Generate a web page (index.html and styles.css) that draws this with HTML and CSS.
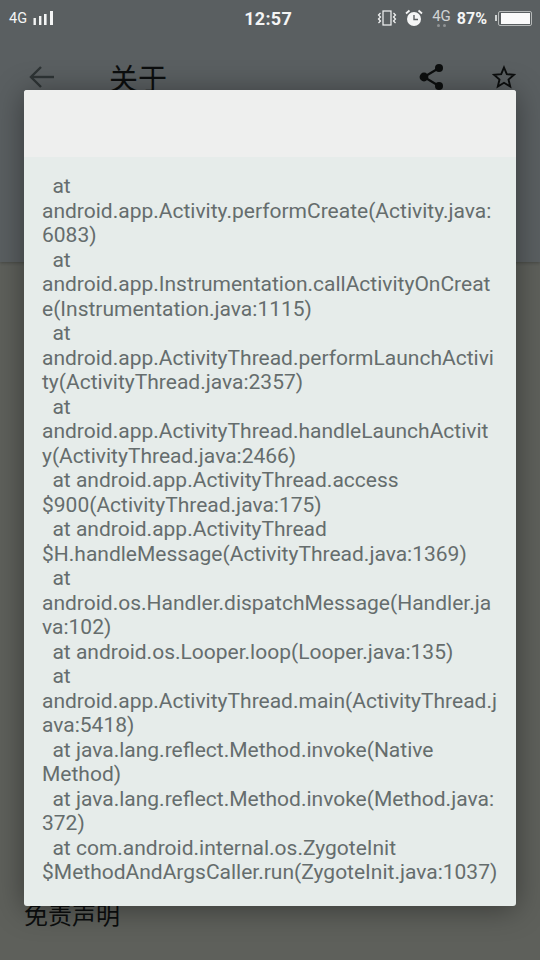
FILE: index.html
```html
<!DOCTYPE html>
<html lang="zh">
<head>
  <meta charset="UTF-8">
  <meta name="viewport" content="width=device-width, initial-scale=1.0">
  <title>关于</title>
  <link rel="stylesheet" href="styles.css">
</head>
<body>
  <div class="screen">
    <header class="app-header">
      <div class="status-bar">
        <div class="status-left">
          <span class="net">4G</span>
          <svg class="signal" width="21" height="16" viewBox="0 0 21 16">
            <rect x="0.5" y="8" width="2.4" height="7" />
            <rect x="6" y="6" width="2.4" height="9" />
            <rect x="11" y="4" width="2.6" height="11" />
            <rect x="17" y="1" width="3" height="14" />
          </svg>
        </div>
        <div class="status-time">12:57</div>
        <div class="status-right">
          <svg class="vibrate" width="20" height="16" viewBox="0 0 20 16" fill="none" stroke="#f4f5f5" stroke-width="1.2">
            <rect x="6" y="1" width="8" height="14" />
            <path d="M3.5 3 L1.5 5 L3.5 7 L1.5 9 L3.5 11 L1.5 13" />
            <path d="M16.5 3 L18.5 5 L16.5 7 L18.5 9 L16.5 11 L18.5 13" />
          </svg>
          <svg class="alarm" width="18" height="18" viewBox="0 0 18 18">
            <circle cx="9" cy="10" r="7" fill="#f4f5f5" />
            <path d="M9 6 V10.5 H13" fill="none" stroke="#5a5f61" stroke-width="1.4" />
            <path d="M1 4.5 L4.5 1.5 M17 4.5 L13.5 1.5" stroke="#f4f5f5" stroke-width="1.8" />
          </svg>
          <div class="net-wrap">
            <span class="net net-dim">4G</span>
            <span class="net-dots"><i></i><i></i></span>
          </div>
          <span class="battery-text">87%</span>
          <div class="battery"><div class="battery-tip"></div><div class="battery-body"><div class="battery-fill"></div></div></div>
        </div>
      </div>
      <div class="toolbar">
        <svg class="back" width="28" height="24" viewBox="0 0 28 24" fill="none" stroke="#2e3435" stroke-width="2.4">
          <path d="M27 12 H4" />
          <path d="M14 2 L4 12 L14 22" />
        </svg>
        <h1 class="title">关于</h1>
        <svg class="share" width="26" height="28" viewBox="0 0 26 28">
          <path d="M20 5 L5 14 L20 23" fill="none" stroke="#0c0e0e" stroke-width="2.2" />
          <circle cx="20" cy="5" r="4" fill="#0c0e0e" />
          <circle cx="5" cy="14" r="4.4" fill="#0c0e0e" />
          <circle cx="20" cy="23" r="4" fill="#0c0e0e" />
        </svg>
        <svg class="star" width="24" height="24" viewBox="0 0 24 24" fill="none" stroke="#0c0e0e" stroke-width="1.9">
          <path d="M12 2.5 L14.8 9.2 L22 9.8 L16.5 14.5 L18.2 21.6 L12 17.8 L5.8 21.6 L7.5 14.5 L2 9.8 L9.2 9.2 Z" />
        </svg>
      </div>
    </header>

    <main class="page">
      <div class="disclaimer">免责声明</div>
    </main>

    <div class="dialog">
      <div class="dialog-title"></div>
      <pre class="dialog-body">  at
android.app.Activity.performCreate(Activity.java:
6083)
  at
android.app.Instrumentation.callActivityOnCreat
e(Instrumentation.java:1115)
  at
android.app.ActivityThread.performLaunchActivi
ty(ActivityThread.java:2357)
  at
android.app.ActivityThread.handleLaunchActivit
y(ActivityThread.java:2466)
  at android.app.ActivityThread.access
$900(ActivityThread.java:175)
  at android.app.ActivityThread
$H.handleMessage(ActivityThread.java:1369)
  at
android.os.Handler.dispatchMessage(Handler.ja
va:102)
  at android.os.Looper.loop(Looper.java:135)
  at
android.app.ActivityThread.main(ActivityThread.j
ava:5418)
  at java.lang.reflect.Method.invoke(Native
Method)
  at java.lang.reflect.Method.invoke(Method.java:
372)
  at com.android.internal.os.ZygoteInit
$MethodAndArgsCaller.run(ZygoteInit.java:1037)</pre>
    </div>
  </div>
</body>
</html>
```

FILE: styles.css
```css
* {
  box-sizing: border-box;
}

body {
  margin: 0;
  font-family: Roboto, "Noto Sans CJK SC", sans-serif;
}

.screen {
  position: relative;
  width: 540px;
  height: 960px;
  overflow: hidden;
  display: flex;
  flex-direction: column;
  background-color: #5e605b;
}

.app-header {
  height: 262px;
  background-color: #5a5f61;
  box-shadow: 0 1px 3px rgba(0, 0, 0, 0.25);
  position: relative;
}

.status-bar {
  height: 36px;
  padding: 0 8px 0 9px;
  display: flex;
  align-items: center;
  justify-content: space-between;
  color: #f4f5f5;
}

.status-left {
  width: 150px;
  display: flex;
  align-items: center;
  gap: 6px;
}

.signal {
  fill: #f4f5f5;
}

.net {
  font-size: 14.5px;
}

.status-time {
  font-size: 18px;
  font-weight: 700;
  letter-spacing: 0.3px;
}

.status-right {
  display: flex;
  align-items: center;
}

.vibrate {
  margin-right: 8px;
}

.alarm {
  margin-right: 9px;
}

.net-wrap {
  display: flex;
  flex-direction: column;
  align-items: center;
  margin-right: 6px;
}

.net-dim {
  color: #d0d3d3;
  font-size: 15px;
  line-height: 15px;
}

.net-dots {
  display: flex;
  gap: 3px;
  height: 4px;
}

.net-dots i {
  width: 3px;
  height: 3px;
  background-color: #8f9394;
  border-radius: 50%;
}

.battery-text {
  font-size: 16px;
  font-weight: 700;
  margin-right: 8px;
}

.battery {
  display: flex;
  align-items: center;
}

.battery-tip {
  width: 2px;
  height: 6px;
  background-color: #d0d3d3;
}

.battery-body {
  width: 34px;
  height: 15px;
  border: 1px solid #b5b8b8;
  border-radius: 2px;
  padding: 1px;
  margin-left: 1px;
  display: flex;
  justify-content: flex-end;
}

.battery-fill {
  width: 29px;
  background-color: #fafafa;
}

.toolbar {
  height: 82px;
  display: flex;
  align-items: center;
  padding-left: 27px;
}

.title {
  margin: 0 0 0 54px;
  font-size: 29px;
  font-weight: 400;
  color: #0c0e0e;
  flex: 1;
}

.share {
  margin-right: 47px;
}

.star {
  margin-right: 24px;
}

.page {
  flex: 1;
  padding-top: 634px;
}

.disclaimer {
  margin-left: 24px;
  font-size: 24px;
  color: #0c0e0e;
}

/* sits on top of the dimmed page */
.dialog {
  position: absolute;
  left: 24px;
  top: 90px;
  width: 492px;
  height: 816px;
  border-radius: 3px;
  background-color: #e6ecea;
  box-shadow: 0 3px 30px rgba(0, 0, 0, 0.4);
  overflow: hidden;
}

.dialog-title {
  height: 67px;
  background-color: #eeefee;
}

.dialog-body {
  margin: 0;
  padding: 17px 0 0 18px;
  font-family: Roboto, sans-serif;
  font-size: 21px;
  line-height: 24.5px;
  color: #656d6d;
}
```
